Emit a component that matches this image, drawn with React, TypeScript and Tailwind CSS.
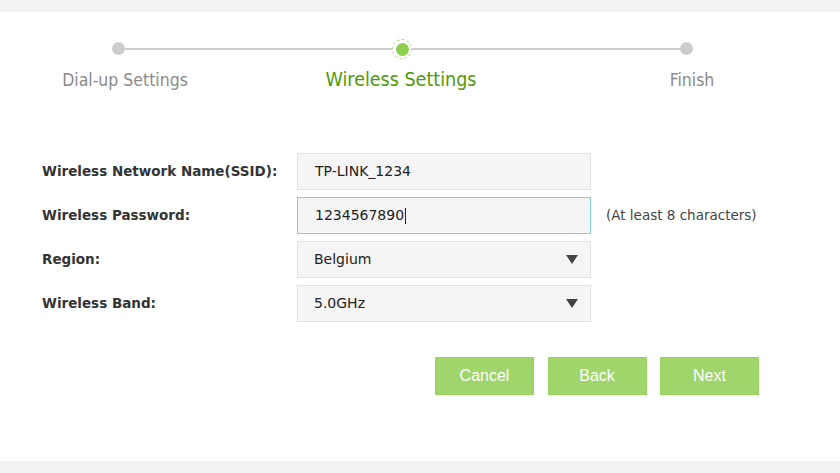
import React from 'react';

const steps = [
    { label: 'Dial-up Settings', active: false },
    { label: 'Wireless Settings', active: true },
    { label: 'Finish', active: false },
];

function Field({ label, children, hint }: { label: string; children: React.ReactNode; hint?: string }) {
    return (
        <div className="flex items-center h-[37px]">
            <div className="w-[255px] text-[13.5px] font-bold text-[#333]">{label}</div>
            {children}
            {hint && <div className="ml-[15px] text-[13.5px] text-[#444]">{hint}</div>}
        </div>
    );
}

function Select({ value }: { value: string }) {
    return (
        <div className="w-[294px] h-[37px] flex items-center justify-between pl-[16px] pr-[12px] bg-[#f5f5f5] border border-[#e3e3e3] text-[14px] text-[#222]">
            <span>{value}</span>
            <svg width="12" height="9" viewBox="0 0 12 9">
                <path d="M0 0 H12 L6 9 Z" fill="#444" />
            </svg>
        </div>
    );
}

export default function App() {
    return (
        <div className="w-[840px] h-[473px] flex flex-col bg-white" style={{ fontFamily: '"DejaVu Sans", Verdana, sans-serif' }}>
            <div className="h-[12px] bg-[#f2f2f2]" />
            <div className="h-[449px]">
                {/* Stepper */}
                <div className="relative ml-[118px] w-[568px] mt-[30px]">
                    <div className="absolute left-0 right-0 top-[6px] h-[2px] bg-[#cccccc]" />
                    <div className="relative flex justify-between h-[14px]">
                        {steps.map((s) => (
                            <div key={s.label} className="w-0 flex flex-col items-center">
                                {s.active ? (
                                    <div className="w-[20px] h-[20px] -mt-[3px] shrink-0 rounded-full border border-dashed border-[#a8db7c] bg-white flex items-center justify-center">
                                        <div className="w-[13px] h-[13px] rounded-full bg-[#8fcf4f]" />
                                    </div>
                                ) : (
                                    <div className="w-[13px] h-[13px] shrink-0 rounded-full bg-[#cccccc]" />
                                )}
                            </div>
                        ))}
                    </div>
                    <div className="flex justify-between items-center mt-[11px] h-[26px]">
                        {steps.map((s, i) => (
                            <div key={s.label} className={`w-0 flex justify-center ${i === 0 ? 'ml-[7px]' : i === 2 ? 'mr-[-6px]' : '-ml-[15px]'}`}>
                                <span
                                    className={`whitespace-nowrap ${s.active ? 'text-[19.5px] text-[#4e9a06]' : 'text-[17.5px] text-[#8a8a8a]'}`}
                                    style={{ fontFamily: '"DejaVu Sans Condensed", "DejaVu Sans", sans-serif' }}
                                >
                                    {s.label}
                                </span>
                            </div>
                        ))}
                    </div>
                </div>

                {/* Form */}
                <div className="ml-[42px] mt-[60px] flex flex-col gap-[7px]">
                    <Field label="Wireless Network Name(SSID):">
                        <div className="w-[294px] h-[37px] flex items-center pl-[17px] bg-[#f5f5f5] border border-[#e3e3e3] text-[14px] text-[#222]">
                            TP-LINK_1234
                        </div>
                    </Field>
                    <Field label="Wireless Password:" hint="(At least 8 characters)">
                        <div className="w-[294px] h-[37px] flex items-center pl-[17px] bg-[#f5f5f5] border border-[#7fcde6] text-[14px] text-[#222]">
                            1234567890<span className="w-px h-[16px] bg-[#222] ml-px" />
                        </div>
                    </Field>
                    <Field label="Region:">
                        <Select value="Belgium" />
                    </Field>
                    <Field label="Wireless Band:">
                        <Select value="5.0GHz" />
                    </Field>
                </div>

                {/* Buttons */}
                <div className="ml-[435px] mt-[35px] flex gap-[13.5px]" style={{ fontFamily: '"Liberation Sans", Arial, sans-serif' }}>
                    {['Cancel', 'Back', 'Next'].map((b) => (
                        <button key={b} className="w-[99px] h-[38px] bg-[#9fd56a] border border-[#96d35e] text-white text-[16px]">
                            {b}
                        </button>
                    ))}
                </div>
            </div>
            <div className="flex-1 bg-[#f2f2f2]" />
        </div>
    );
}
